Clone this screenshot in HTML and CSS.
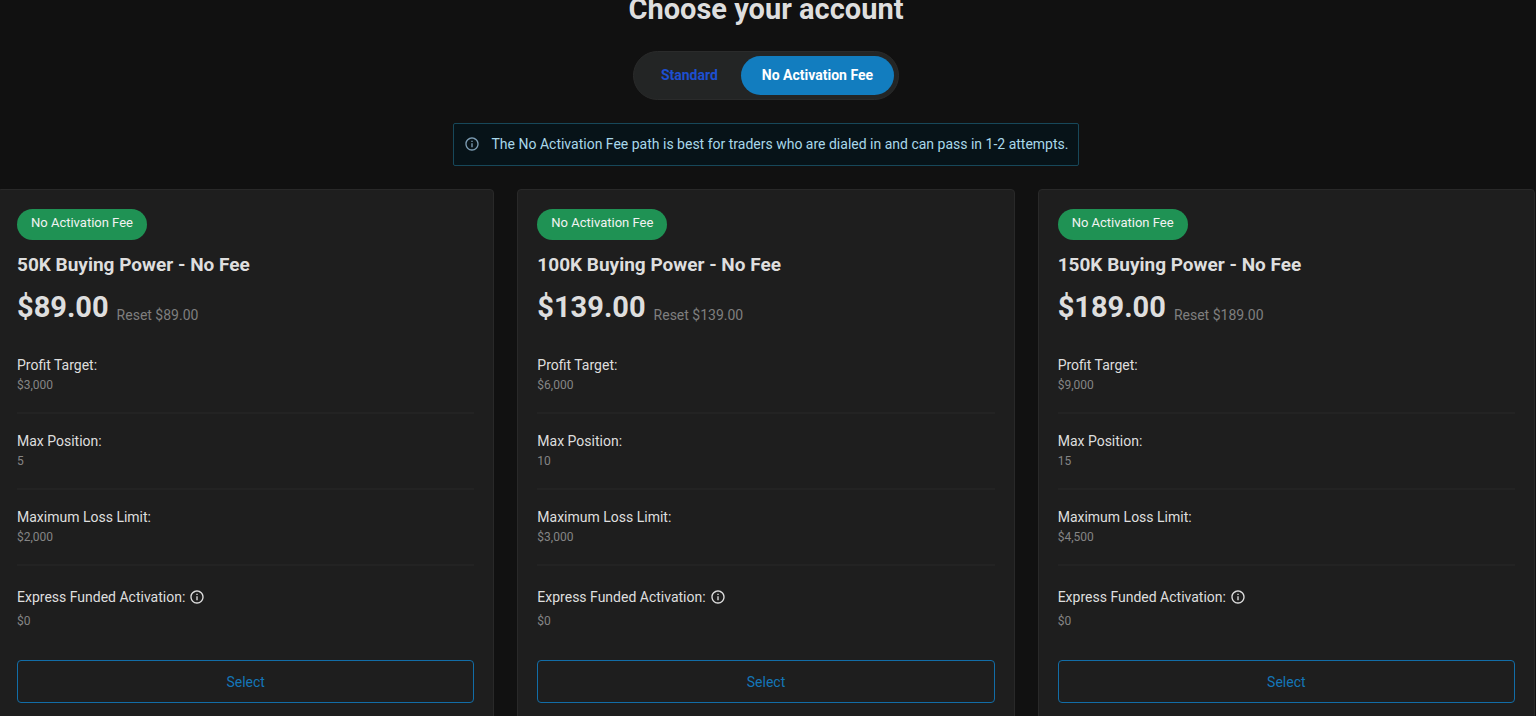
FILE: index.html
```
<!DOCTYPE html>
<html lang="en">

<head>
	<meta charset="utf-8">
	<title>Choose your account</title>
	<link rel="stylesheet" href="styles.css">
</head>

<body>
	<svg class="sprite" aria-hidden="true">
		<symbol id="icon-info" viewBox="0 0 24 24">
			<path d="M11 7h2v2h-2zm0 4h2v6h-2zm1-9C6.48 2 2 6.48 2 12s4.480 10 10 10 10-4.480 10-10S17.520 2 12 2zm0 18c-4.410 0-8-3.590-8-8s3.590-8 8-8 8 3.590 8 8-3.590 8-8 8z" />
		</symbol>
	</svg>
	<main class="pricing">
		<h1 class="heading">Choose your account</h1>
		<div class="toggle">
			<button type="button" class="toggle-btn" aria-pressed="false">Standard</button>
			<button type="button" class="toggle-btn active" aria-pressed="true">No Activation Fee</button>
		</div>
		<div class="notice">
			<svg class="icon"><use href="#icon-info" /></svg>
			<span>The No Activation Fee path is best for traders who are dialed in and can pass in 1-2 attempts.</span>
		</div>
		<div class="cards">
			<section class="card">
				<span class="badge">No Activation Fee</span>
				<h2 class="card-title">50K Buying Power - No Fee</h2>
				<div class="price-row">
					<span class="price">$89.00</span>
					<span class="reset">Reset $89.00</span>
				</div>
				<dl class="features">
					<div class="feature">
						<dt>Profit Target:</dt>
						<dd>$3,000</dd>
					</div>
					<div class="feature">
						<dt>Max Position:</dt>
						<dd>5</dd>
					</div>
					<div class="feature">
						<dt>Maximum Loss Limit:</dt>
						<dd>$2,000</dd>
					</div>
					<div class="feature">
						<dt class="with-icon">Express Funded Activation: <svg class="icon"><use href="#icon-info" /></svg></dt>
						<dd>$0</dd>
					</div>
				</dl>
				<button type="button" class="select-btn">Select</button>
			</section>
			<section class="card">
				<span class="badge">No Activation Fee</span>
				<h2 class="card-title">100K Buying Power - No Fee</h2>
				<div class="price-row">
					<span class="price">$139.00</span>
					<span class="reset">Reset $139.00</span>
				</div>
				<dl class="features">
					<div class="feature">
						<dt>Profit Target:</dt>
						<dd>$6,000</dd>
					</div>
					<div class="feature">
						<dt>Max Position:</dt>
						<dd>10</dd>
					</div>
					<div class="feature">
						<dt>Maximum Loss Limit:</dt>
						<dd>$3,000</dd>
					</div>
					<div class="feature">
						<dt class="with-icon">Express Funded Activation: <svg class="icon"><use href="#icon-info" /></svg></dt>
						<dd>$0</dd>
					</div>
				</dl>
				<button type="button" class="select-btn">Select</button>
			</section>
			<section class="card">
				<span class="badge">No Activation Fee</span>
				<h2 class="card-title">150K Buying Power - No Fee</h2>
				<div class="price-row">
					<span class="price">$189.00</span>
					<span class="reset">Reset $189.00</span>
				</div>
				<dl class="features">
					<div class="feature">
						<dt>Profit Target:</dt>
						<dd>$9,000</dd>
					</div>
					<div class="feature">
						<dt>Max Position:</dt>
						<dd>15</dd>
					</div>
					<div class="feature">
						<dt>Maximum Loss Limit:</dt>
						<dd>$4,500</dd>
					</div>
					<div class="feature">
						<dt class="with-icon">Express Funded Activation: <svg class="icon"><use href="#icon-info" /></svg></dt>
						<dd>$0</dd>
					</div>
				</dl>
				<button type="button" class="select-btn">Select</button>
			</section>
		</div>
	</main>
</body>

</html>
```
FILE: styles.css
```
* {
	box-sizing: border-box;
}

html {
	overflow: hidden;
}

body {
	margin: 0;
	background: #111;
	color: #dedede;
	font-family: Roboto, sans-serif;
	font-size: 14px;
	line-height: 20px;
}

button {
	font-family: inherit;
	font-size: 14px;
	cursor: pointer;
}

.sprite {
	display: none;
}

.icon {
	width: 16px;
	height: 16px;
	fill: currentColor;
	flex: none;
}

/* the cards run slightly past the left edge of the window */
.pricing {
	display: flex;
	flex-direction: column;
	align-items: center;
	margin: -8px 1px 0 -3px;
}

.heading {
	margin: 0 0 24px;
	font-size: 29px;
	font-weight: 700;
	line-height: 35px;
}

.toggle {
	display: flex;
	padding: 4px;
	border: 1px solid #2a2b2b;
	border-radius: 25px;
	background: #232525;
}

.toggle-btn {
	height: 39px;
	padding: 0 23px 2px;
	border: none;
	border-radius: 20px;
	background: none;
	color: #1d4fd0;
	font-weight: 700;
}

.toggle-btn.active {
	padding: 0 21px 2px;
	background: #127dbf;
	color: #fff;
}

.notice {
	display: flex;
	align-items: center;
	gap: 12px;
	margin: 23px 0;
	padding: 10px 10px 11px;
	border: 1px solid #17485a;
	border-radius: 2px;
	background: #071318;
	color: #a9d8ea;
}

.notice .icon {
	color: #7d9db4;
}

.cards {
	display: grid;
	grid-template-columns: repeat(3, 1fr);
	gap: 23px;
	width: 100%;
}

.card {
	padding: 19px;
	border: 1px solid #292929;
	border-radius: 4px;
	background: #1e1e1e;
}

.badge {
	display: inline-block;
	padding: 4px 14px 7px;
	border-radius: 16px;
	background: #1f9254;
	color: #f2f2f2;
	font-size: 13px;
}

.card-title {
	margin: 11px 0 8px;
	font-size: 19px;
	font-weight: 700;
	line-height: 28px;
}

.price-row {
	display: flex;
	align-items: flex-end;
	gap: 8px;
}

.price {
	font-size: 29px;
	font-weight: 700;
	line-height: 40px;
}

.reset {
	padding-bottom: 2px;
	color: #7f7f7f;
}

.features {
	margin: 11px 0 0;
}

.feature {
	padding: 17px 0;
}

.feature + .feature {
	border-top: 2px solid #232323;
}

.with-icon {
	display: flex;
	align-items: center;
	gap: 4px;
	min-height: 28px;
}

.feature dd {
	margin: 0;
	color: #858585;
	font-size: 12px;
}

.select-btn {
	width: 100%;
	height: 43px;
	margin-top: 12px;
	border: 1px solid #126da7;
	border-radius: 4px;
	background: none;
	color: #1476b8;
}
```
